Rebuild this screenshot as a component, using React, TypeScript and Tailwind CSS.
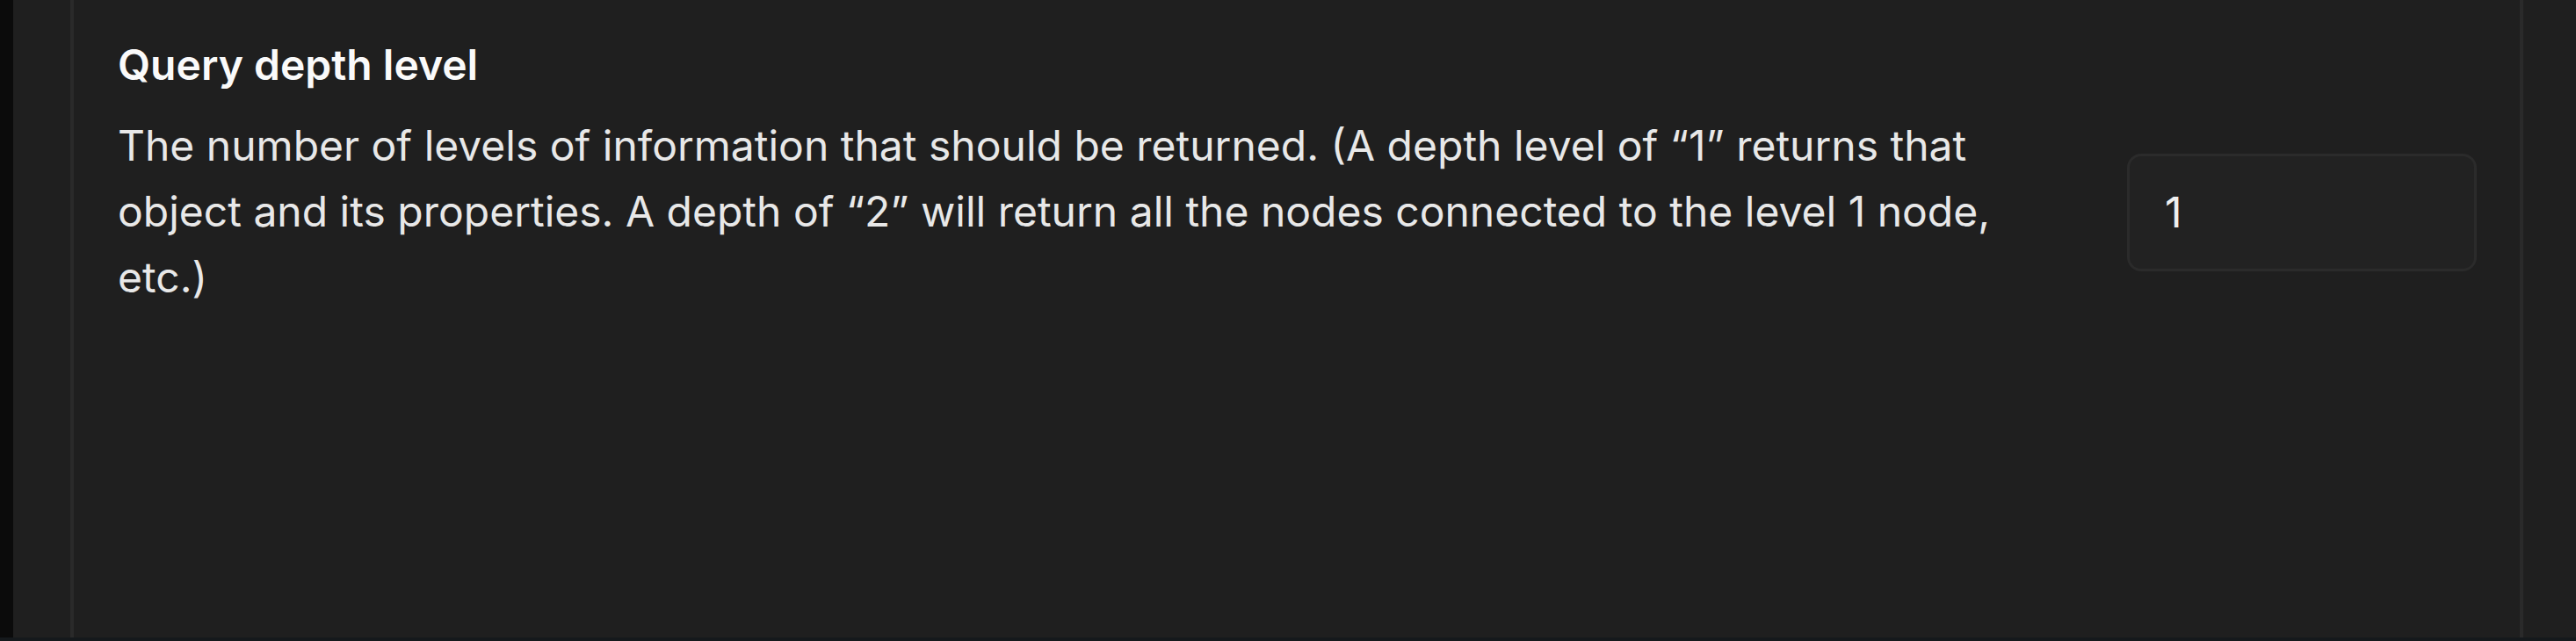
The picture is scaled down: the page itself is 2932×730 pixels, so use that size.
import React from "react";

export default function App() {
  return (
    <div
      className="flex h-[730px] w-[2932px] flex-col overflow-hidden bg-[#1f1f1f]"
      style={{ fontFamily: "Inter, 'Noto Sans', sans-serif" }}
    >
      <div className="flex min-h-0 flex-1">
        <div className="w-[15px] shrink-0 bg-[#0b0b0b]" />
        <div className="w-[65px] shrink-0 bg-[#1f1f1f]" />
        <div className="flex w-[2792px] shrink-0 flex-col border-x-[4px] border-[#2a2a2a] bg-[#1f1f1f] pl-[50px] pr-[49px] pt-[40px]">
          <h2 className="text-[48px] font-semibold leading-[67px] text-[#fafafa]">
            Query depth level
          </h2>
          <div className="mt-[21px] flex items-start gap-[100px]">
            <p className="flex-1 text-[48px] font-normal leading-[75px] text-[#e8e8e8]">
              The number of levels of information that should be returned. (A depth level of “1” returns that object and its properties. A depth of “2” will return all the nodes connected to the level 1 node, etc.)
            </p>
            <div className="mt-[47px] flex h-[134px] w-[398px] shrink-0 items-center rounded-[16px] border-[3px] border-[#2b2b2b] bg-[#222222] px-[40px] text-[48px] leading-[60px] text-[#f0f0f0]">
              1
            </div>
          </div>
        </div>
        <div className="flex-1 bg-[#1f1f1f]" />
      </div>
      <div className="h-[4px] shrink-0 bg-[#15191c]" />
    </div>
  );
}
